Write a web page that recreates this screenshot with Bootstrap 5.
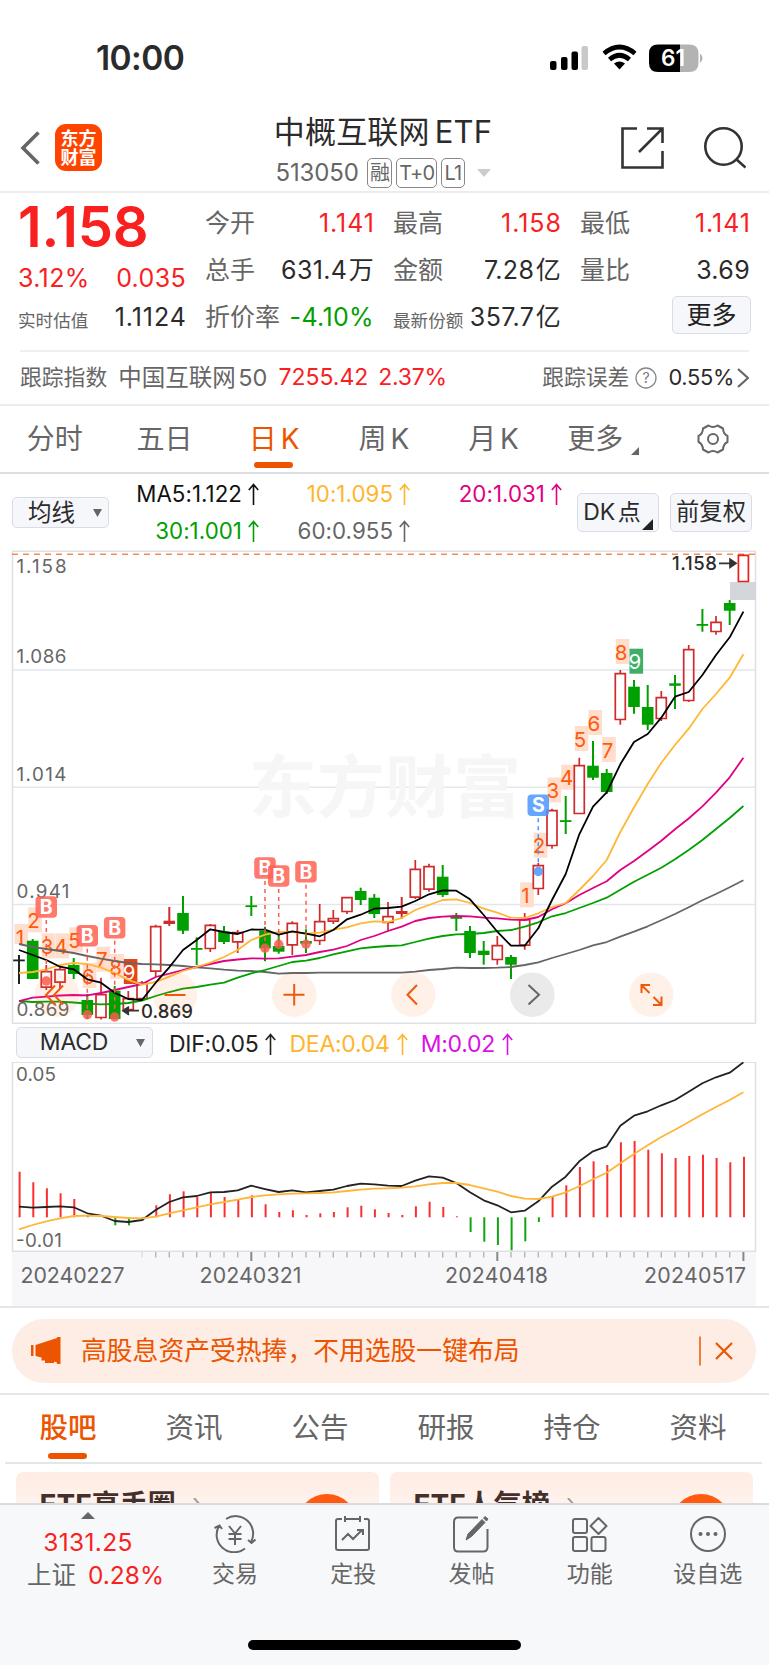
<!DOCTYPE html>
<html lang="zh-CN">
<head>
<meta charset="utf-8">
<meta name="viewport" content="width=device-width, initial-scale=1">
<title>中概互联网ETF 513050</title>
<link href="https://cdn.jsdelivr.net/npm/bootstrap@5.3.0/dist/css/bootstrap.min.css" rel="stylesheet">
<style>
:root{--up:#f9211f;--down:#00a000;--brand:#ec5400;--dim:#666;--ink:#2b2b2b;--line:#e4e6ea}
body{width:769px;height:1665px;overflow:hidden;background:#fff;color:var(--ink);font-family:Inter,"Noto Sans CJK SC",sans-serif;font-size:24px;line-height:1;white-space:nowrap}
svg{display:block;flex:none}
.up{color:var(--up)}.down{color:var(--down)}.dim{color:var(--dim)}.brand{color:var(--brand)}
.status{height:100px;padding:17px 66px 0 96px}
.clock{font-size:33.5px;font-weight:600;letter-spacing:-.6px}
.head{height:92.5px;border-bottom:2px solid #ececec;padding:5px 23px 0 20px}
.logo{width:47px;height:47px;border-radius:11px;background:#ff4400;color:#fff;font-size:18px;font-weight:700;line-height:19px;margin-left:15px}
.heading{padding-left:44px}
.title{font-size:31px;line-height:42px;letter-spacing:.2px;word-spacing:-4px}
.code{font-size:24px;letter-spacing:-.1px;line-height:32px;margin-bottom:-4px;margin-top:4px}
.chip{border:1.5px solid #888;border-radius:5px;height:30px;font-size:20px;padding:0 2px;letter-spacing:-.7px}
.quote{display:grid;grid-template-columns:168px 169px 168px 170px;column-gap:19px;grid-template-rows:repeat(3,47px);padding-left:18px;height:157px;padding-top:7px;font-size:25px;letter-spacing:.35px;word-spacing:-6px}
.quote>div{display:flex;align-items:center;justify-content:space-between}
.quote .wide{letter-spacing:.95px;margin-right:-.9px}
.quote .lbl{font-size:25px;color:var(--dim);letter-spacing:0}
.quote .lbl-s{font-size:17.6px;color:var(--dim);letter-spacing:0;padding-top:8px}
.price{font-size:56px;font-weight:600;letter-spacing:-.2px;padding-top:7px}
.pill{background:#f6f7fa;border:1.5px solid #d9dce5;border-radius:5px;display:flex;align-items:center;justify-content:center}
.track{height:54px;margin:0 20px;border-top:2px solid #eeeff1;font-size:23px;letter-spacing:-.3px}
.track .dim{letter-spacing:0;word-spacing:-4px}
.period{display:grid;grid-template-columns:repeat(7,109.7px);height:70px;border-top:2px solid #ececee;border-bottom:2px solid #dcdee4;font-size:28px;color:var(--dim);word-spacing:-4px}
.period>div,.feed>div{position:relative;display:flex;align-items:center;justify-content:center}
.on{color:var(--brand)}
.on::after{content:"";position:absolute;bottom:4px;left:50%;width:39px;margin-left:-20px;height:6px;border-radius:3px;background:var(--brand)}
.ma{height:76px;padding-left:12px}
.ma-grid{display:grid;grid-template-columns:150px 151px 152px;grid-template-rows:37px 37px;font-size:22.3px;letter-spacing:.05px;margin-top:3px}
.ma-grid>div{display:flex;align-items:center;justify-content:flex-end;gap:6px}
.macd{height:38px;padding-left:16px;font-size:23px;letter-spacing:-.25px}
.dates{height:56px;border-bottom:2px solid var(--line)}
.notice{height:64px;margin:11px 13px 10.5px 12px;border-radius:33px;background:#fdede4;color:var(--brand);font-size:25.8px;padding:0 23px 0 18px}
.feed{display:grid;grid-template-columns:repeat(6,126px);height:68.5px;margin:0 7px 0 5px;border-bottom:2px solid var(--line);font-size:28.5px;color:var(--dim)}
.feed .on::after{bottom:3px}
.rule{border-top:2px solid var(--line)}
.cards{height:39.5px;padding:8px 16px 0 15.500px;gap:11px;overflow:hidden}
.promo{width:363px;height:90px;border-radius:7px 7px 0 0;background:linear-gradient(#ffece4,#fff3ee 40px);padding:19px 22px 0 24px;color:#43302b;font-size:28px;font-weight:700}
.disc{width:60px;height:60px;border-radius:50%;background:#ff5a10;margin-top:3px}
.dock{height:166px;background:#f7f8fa;border-top:2px solid #d9dbdf;position:relative}
.dock-grid{display:grid;grid-template-columns:176px repeat(5,118.2px);height:96px;color:var(--dim);font-size:23px}
.dock-grid>div{display:flex;flex-direction:column;align-items:center}
.dock-grid .ico{margin:10px 0 9.500px}
.index-val{font-size:24.5px;letter-spacing:.35px}
.home{width:273px;height:10px;border-radius:5px;background:#000;position:absolute;left:248px;top:134.500px}
svg text{font-family:Inter,"Noto Sans CJK SC",sans-serif}
</style>
</head>
<body>
<div class="status d-flex align-items-center justify-content-between">
  <span class="clock">10:00</span>
  <svg width="154" height="30" viewBox="0 0 154 30"><rect y="17" x="1" width="6.5" height="9" rx="2"/><rect x="12" y="13" width="6.5" height="13" rx="2"/><rect x="22.500" y="7.500" width="6.500" height="18.500" rx="2"/><rect x="32.500" y="2" width="6.500" height="24" rx="2" fill="#c9c9c9"/>
  <g fill="none" stroke="#000" stroke-width="4.700"><path d="M55 9.500Q70.500-3.500 86 9.500"/><path d="M60.500 15.500Q70.500 7 80.500 15.500"/></g><path d="M65 19.500Q70.500 15.500 76 19.500L70.500 25.500Z"/>
  <path d="M109 .5H131V28H109Q100 28 100 19V9.500Q100 .5 109 .5Z"/><path d="M131 .5H140Q149.500 .5 149.500 9.500V19Q149.500 28 140 28H131Z" fill="#b3b3b3"/><path d="M151 9.500Q156 14 151 19Z" fill="#b3b3b3"/><text x="112" y="22.300" font-size="22.500" font-weight="600" fill="#fff" textLength="24" lengthAdjust="spacingAndGlyphs">61</text></svg>
</div>
<div class="head d-flex align-items-center">
  <svg width="20" height="34" viewBox="0 0 20 34" fill="none" stroke="#666" stroke-width="3.600"><path d="M18.500 1.500 3 17 18.500 32.500"/></svg>
  <div class="logo d-flex flex-column align-items-center justify-content-center"><span>东方</span><span>财富</span></div>
  <div class="heading flex-grow-1 d-flex flex-column align-items-center">
    <div class="title">中概互联网 ETF</div>
    <div class="code dim d-flex align-items-center gap-1"><span class="me-1">513050</span><span class="chip d-flex align-items-center">融</span><span class="chip d-flex align-items-center">T+0</span><span class="chip d-flex align-items-center">L1</span><svg class="ms-2" width="14" height="8"><path d="M0 0H14L7 8Z" fill="#ccc"/></svg></div>
  </div>
  <svg width="126" height="44" viewBox="0 0 126 44" fill="none" stroke="#333" stroke-width="2.600"><path d="M17 2.500H2.500V41.500H42.500V25M27 2.500H42.500V17M42 3 19 26"/><circle cx="103.500" cy="20.500" r="18.200"/><path d="M116 33 125.500 41.500"/></svg>
</div>
<div class="quote">
  <div><span class="price up">1.158</span></div>
  <div><span class="lbl">今开</span><span class="up wide">1.141</span></div>
  <div><span class="lbl">最高</span><span class="up wide">1.158</span></div>
  <div><span class="lbl">最低</span><span class="up wide">1.141</span></div>
  <div class="up" style="padding-top:16px"><span>3.12%</span><span>0.035</span></div>
  <div><span class="lbl">总手</span><span>631.4 万</span></div>
  <div><span class="lbl">金额</span><span>7.28 亿</span></div>
  <div><span class="lbl">量比</span><span>3.69</span></div>
  <div><span class="lbl-s">实时估值</span><span class="wide">1.1124</span></div>
  <div><span class="lbl">折价率</span><span class="down">-4.10%</span></div>
  <div><span class="lbl-s">最新份额</span><span>357.7 亿</span></div>
  <div class="justify-content-end"><span class="pill lbl" style="width:79px;height:38px;color:#222;margin-right:-1px;margin-top:-4px">更多</span></div>
</div>
<div class="track d-flex align-items-center">
  <span class="dim" style="font-size:21.800px">跟踪指数</span><span class="dim" style="margin-left:11px;font-size:23.500px">中国互联网 50</span><span class="up" style="margin-left:11px;letter-spacing:0">7255.42</span><span class="up" style="margin-left:10px">2.37%</span>
  <span class="dim ms-auto" style="font-size:21.800px">跟踪误差</span>
  <svg style="margin:0 11px 0 6px" width="22" height="22" viewBox="0 0 22 22"><circle cx="11" cy="11" r="10" fill="none" stroke="#888" stroke-width="1.300"/><text x="11" y="16" font-size="14" text-anchor="middle" fill="#777">?</text></svg>
  <span style="font-size:21.800px">0.55%</span><svg style="margin-left:3px" width="12" height="20" viewBox="0 0 12 20" fill="none" stroke="#666" stroke-width="2.200"><path d="M1 1 11 10 1 19"/></svg>
</div>
<div class="period">
  <div>分时</div><div>五日</div><div class="on">日 K</div><div>周 K</div><div>月 K</div>
  <div>更多<svg class="ms-2 mt-4" width="8" height="8"><path d="M8 0V8H0Z" fill="#666"/></svg></div>
  <div><svg width="32" height="32" viewBox="0 0 32 32" fill="none" stroke="#666" stroke-width="2"><path d="M11.500 2.500Q16 5.500 20.500 2.500L26 5.500Q26.300 11 30.500 13V19Q26.300 21 26 26.500L20.500 29.500Q16 26.500 11.500 29.500L6 26.500Q5.700 21 1.500 19V13Q5.700 11 6 5.500Z" stroke-linejoin="round"/><circle cx="16" cy="16" r="5"/></svg></div>
</div>
<div class="ma d-flex align-items-center">
  <div class="pill" style="width:97px;height:31px;font-size:23.500px;gap:18px;padding-left:9px;margin-top:2px">均线<svg width="9" height="8"><path d="M0 0H9L4.500 8Z" fill="#666"/></svg></div>
  <div class="ma-grid" id="ma"></div>
  <div class="pill" style="width:82px;height:39px;font-size:23px;margin-left:15px;gap:1px;margin-top:1px;word-spacing:-4px">DK 点<svg width="11" height="11" style="margin-top:25px"><path d="M11 0V11H0Z" fill="#222"/></svg></div>
  <div class="pill" style="width:82px;height:39px;font-size:23.300px;margin-left:11px;margin-top:1px">前复权</div>
</div>
<svg id="kline" width="769" height="474" viewBox="0 550 769 474"></svg>
<div class="macd d-flex align-items-center">
  <div class="pill" style="width:137px;height:31px;gap:28px;padding-left:16px">MACD<svg width="9" height="8"><path d="M0 0H9L4.500 8Z" fill="#666"/></svg></div>
  <div class="d-flex" id="macdText" style="margin:3px 0 0 16px;gap:13px"></div>
</div>
<svg id="macd" width="769" height="190" viewBox="0 1062 769 190"></svg>
<div class="dates"><svg id="dates" width="769" height="54" viewBox="0 1252 769 54"></svg></div>
<div class="notice d-flex align-items-center">
  <svg width="31" height="27" viewBox="0 0 31 27" fill="#ec5400"><path d="M1 8h2.500v11H1zM5.500 8 27 1V0h3.500v27H27v-1.500L24 24.500V26H15V23.500H11.500V20.500L5.500 19Z"/></svg>
  <span style="margin-left:20px">高股息资产受热捧，不用选股一键布局</span>
  <svg class="ms-auto" width="35" height="30" viewBox="0 0 35 30" stroke="#ec5400" fill="none"><path d="M2 .5V29.500" stroke-width="1.500"/><path d="M18 7 34 23M34 7 18 23" stroke-width="2.200"/></svg>
</div>
<div class="rule"></div>
<div class="feed"><div class="on fw-medium">股吧</div><div>资讯</div><div>公告</div><div>研报</div><div>持仓</div><div>资料</div></div>
<div class="cards d-flex">
  <div class="promo d-flex"><span>ETF高手圈</span><svg width="10" height="16" style="margin:7px 0 0 17px" fill="none" stroke="#a99" stroke-width="2"><path d="M1 0 8 8 1 16"/></svg><div class="disc ms-auto"></div></div>
  <div class="promo d-flex"><span>ETF人气榜</span><svg width="10" height="16" style="margin:7px 0 0 17px" fill="none" stroke="#a99" stroke-width="2"><path d="M1 0 8 8 1 16"/></svg><div class="disc ms-auto"></div></div>
</div>
<div class="dock">
  <div class="dock-grid">
    <div><svg width="14" height="7" style="margin:7px 0 11px"><path d="M7 0 14 7H0Z" fill="#666"/></svg><span class="up index-val">3131.25</span><div class="d-flex align-items-center" style="margin-top:8px;padding-left:15px;gap:12px"><span style="font-size:24.500px">上证</span><span class="up" style="font-size:24.500px">0.28%</span></div></div>
    <div><svg class="ico" width="44" height="38" viewBox="0 0 44 38" fill="none" stroke="#666" stroke-width="2"><path d="M13 4A17.500 17.500 0 0 1 38 27M32 33.500A17.500 17.500 0 0 1 6 11M1.500 13 6.500 10.500 9 14M42.500 24.500 38.500 28 35 25M16 11 22 18.500 28 11M15.500 19H28.500M15.500 24H28.500M22 18.500V30"/></svg><span>交易</span></div>
    <div><svg class="ico" width="38" height="38" viewBox="0 0 38 38" fill="none" stroke="#666" stroke-width="2"><path d="M8 4H4Q2 4 2 6V33Q2 35 4 35H33Q35 35 35 33V6Q35 4 33 4H30M11 4H26M11 1V7M26 1V7M8 25 14 19 19 24 28 15M23 15H29V20"/></svg><span>定投</span></div>
    <div><svg class="ico" width="38" height="38" viewBox="0 0 38 38" fill="none" stroke="#666" stroke-width="2"><path d="M26 2.500H6Q2 2.500 2 7V32Q2 36.500 6 36.500H31Q35.500 36.500 35.500 32V14"/><path d="M14 25 16 19 30 4.500 33 7.500 19.500 21.500ZM31.500 3 33 1.500 36 4 34.500 6Z" fill="#666" stroke-width="1"/></svg><span>发帖</span></div>
    <div><svg class="ico" width="38" height="38" viewBox="0 0 38 38" fill="none" stroke="#666" stroke-width="2"><rect x="2" y="4" width="14" height="14" rx="2"/><rect x="2" y="22" width="14" height="14" rx="2"/><rect x="20.500" y="22" width="14" height="14" rx="2"/><path d="M27.500 3 35.500 11 27.500 19 19.500 11Z" stroke-linejoin="round"/></svg><span>功能</span></div>
    <div><svg class="ico" width="38" height="38" viewBox="0 0 38 38" fill="none" stroke="#666" stroke-width="2"><circle cx="19" cy="19" r="17"/><g fill="#666" stroke="none"><circle cx="11.500" cy="19" r="2"/><circle cx="19" cy="19" r="2"/><circle cx="26.500" cy="19" r="2"/></g></svg><span>设自选</span></div>
  </div>
  <div class="home"></div>
</div>
<script src="https://cdn.jsdelivr.net/npm/bootstrap@5.3.0/dist/js/bootstrap.bundle.min.js"></script>
<script>
const X=i=>19+i*13.667, f=n=>n.toFixed(1);
const arrow='<svg width="11" height="23" viewBox="0 0 11 23" fill="none" stroke="currentColor" stroke-width="1.6"><path d="M5.500 22V1.500M.8 7 5.500 1.500 10.200 7"/></svg>';
ma.innerHTML=[['MA5:1.122','#111'],['10:1.095','#ffb52e'],['20:1.031','#e00084'],['30:1.001','#00a000'],['60:0.955','#666']].map(([t,c])=>`<div style="color:${c}"><span>${t}</span>${arrow}</div>`).join('');
macdText.innerHTML=[['DIF:0.05','#222'],['DEA:0.04','#ffb52e'],['M:0.02','#d911e4']].map(([t,c])=>`<div class="d-flex align-items-center" style="color:${c};gap:7px"><span>${t}</span>${arrow}</div>`).join('');
const line=(a,c,w=2)=>`<polyline fill="none" stroke="${c}" stroke-width="${w}" stroke-linejoin="round" points="${a.map((y,i)=>f(X(i))+','+f(y)).join(' ')}"/>`;
const tx=(x,y,t,s,c,w,extra='')=>`<text x="${x}" y="${y}" font-size="${s}" fill="${c}" ${w?`textLength="${w}"`:''} ${extra}>${t}</text>`;
/* type, high, body top, body bottom, low : r hollow, R solid red, g green, k black */
const K=`k 955 959.5 960.5 984|g 939 940.7 979 979|r 965 971 987.7 990|r 967 969 982.7 989|g 958 965 974 979|g 994 1000 1015 1019|r 977.7 994 1018 1019.5|g 986 990.7 1019 1019|r 991 998 1010 1012|r 981 982.5 999 1001|r 924.7 926 971.7 976.7|R 907 920.7 924 926|g 896 913 930.7 934|g 937.3 948 949.5 965|r 924 924.7 949 952|g 926 931.7 942 944|r 930 932 942.3 953|g 896 905.3 906.8 916|g 926.7 930.7 948.3 961.3|g 935 946 951.7 953.7|r 921.3 922.7 945.3 955|g 929.3 941 943.7 953|r 904 921 941 945|r 910 918 921.7 924|r 897 897 912 914|g 887.7 891 900 905|g 894 897.7 914 918|r 902 916 923 931|R 897 911 914 918.7|r 860 868.7 897.7 899|r 863.7 866 889.7 891.7|g 865 876.7 895 897|g 913 917 918.5 931|g 926 931 953 958|g 941 950.7 955 964.7|r 936 945 960 964.7|g 955 957 964.7 979|r 913 919 945.7 949.7|r 863 865 889 895|r 808.7 810 846 848.7|g 796 820.2 821.8 834|r 757.7 765 814 814|g 741 765.7 777.7 780|g 769 773 792 794|r 670 673 720 724.7|g 680 686.7 707 713.7|g 685 707 724.7 730|r 691 697 719 721|g 675 683.3 685.8 709|r 645 649 701 702|g 609 624 625.5 631.7|r 616 621.7 632 634.7|g 600 603 610.7 625|r 554.300 554.700 582 582`.split('|').map(s=>{s=s.split(' ');return[s[0],...s.slice(1).map(Number)]});
const MA={
'#666':[944,947,949,951,953,956,958.7,961,963,964,964.3,965,966,967.3,968.3,969.7,970.7,971,972,973.7,973,973,972.7,972.7,972.7,972.7,972.7,972.7,972.7,971.7,970,969,967.7,968,968,967.7,967,965,962.3,958,954,950,945.3,942,936.7,931.7,926.3,920.3,914,907.3,900.3,894,887.3,880.3],
'#00a000':[1001,1002,1001.7,1001.7,1002.5,1003.7,1004.3,1004,1003,1000.7,996,992,988.7,987,984.7,982.7,977.7,973.3,970,966,962,960.7,958,954.3,951.3,948.3,947,946,945.3,942,938.7,936,934.3,934,933,931,930,926.7,922.3,916.3,913,908,903,897.7,889.7,881.7,874.7,867.7,859.3,850,840,829,818,806],
'#e00084':[1001,997.7,996.7,995.5,995,995.3,993,990,987,984,977,973.7,970,967,964,961,959.5,958.3,958.7,958.3,956.7,955,952,949.7,946,940,936,931,926.7,921,918,916.7,916,916.3,917.7,918.3,919.7,920,917,909.3,903.3,895,888,881.3,870,861,851,840.7,829.3,818.5,806.3,792.7,777.3,757.7],
'#ffb835':[973,972,969.3,965,963,964,967.7,973,980,984.7,982,976.7,971,967,962.7,957,950,940,934.7,932,932,933.7,932.7,929.7,927.3,923.3,921.3,922,918,910,905,900,899.3,903,908.7,912.7,917.7,918,913.3,907,903,890,876,860,832,807.5,784,762.7,745,728.7,709,694,677.7,654.3],
'#000':[950,955,960,966.7,969.3,979.3,982.7,992.7,999,1000,982.7,967.3,950,940,929.3,932,934,929.5,929.7,934.7,931.3,933.7,936.3,930,919.3,914.7,908.7,908,906.7,901,894.3,890.3,890.7,899.3,915,931.7,945.7,945.7,928.3,900,874,834.3,806.7,792.3,764.3,742,734,717.7,696.7,692,675,655,637.3,611.7]};
let h='<g stroke="#e4e7ec" stroke-width="1.6" fill="none"><path d="M12 670H756M12 787.300H756M12 904.500H756"/><path d="M12.500 551.300H755.500V1023.300H12.500Z" stroke="#dfe1e6"/></g>';
h+=tx(249,812,'东方财富',68,'#f6f6f6',272,'font-weight="700"');
h+='<path d="M12 554.300H756" stroke="#f58b52" stroke-width="1.500" stroke-dasharray="6 5"/><rect x="730" y="582" width="26" height="18" fill="#d3d6db"/>';
[[573,'1.158'],[663,'1.086'],[781,'1.014'],[898,'0.941'],[1016,'0.869']].forEach(a=>h+=tx(16.5,a[0],a[1],18.8,'#666',a[1][0]=='0'?53:50));
/* TD sequence counters */
[[0,924,1],[1,907.3,2],[2,933.3,3],[3,933.3,4],[4,927.3,5],[5,963,6],[6,946.7,7],[7,954,8],[8,959,9,'#e5431a'],[37,882.3,1],[38,832.7,2],[39,777.5,3],[40,764.7,4],[41,726,5],[42,710,6],[43,737,7],[44,639,8],[45,648.7,9,'#3cb066']].forEach(([i,y,n,c])=>h+=`<rect x="${f(X(i)-4.5)}" y="${y}" width="13.600" height="${n==1&&i==0?20:25}" fill="${c||'#ffdecd'}"/>`+tx(f(X(i)+.8),y+20.500,n,20.5,c?'#fff':'#ff5a0a',0,'text-anchor="middle"'));
K.forEach(([t,hi,a,b,lo],i)=>{const x=X(i),c=t=='g'?'#00a000':t=='k'?'#222':'#cf2b2b';
 h+=t=='r'?`<path d="M${f(x)} ${hi}V${a}M${f(x)} ${b}V${lo}M${f(x-5)} ${a+.7}H${f(x+5)}V${b-.5}H${f(x-5)}Z" fill="none" stroke="${i==53?'#e8201c':c}" stroke-width="1.700"/>`:`<path d="M${f(x)} ${hi}V${lo}" stroke="${c}" stroke-width="2"/><rect x="${f(x-5.8)}" y="${a}" width="11.600" height="${f(Math.max(b-a,1.8))}" fill="${c}"/>`});
for(const c in MA)h+=line(MA[c],c,1.8);
/* buy and sell marks */
[[2,907,981],[5,935.7,1014.7],[7,927.7,1017],[18,868,948.3],[19,876,944.3],[21,871.7,944.3],[38,805.3,871.5]].forEach(([i,y,d])=>{const s=i==38,x=X(i),c=s?'#4a96ff':'#fa5c50';
 h+=`<path d="M${f(x)} ${y+13}V${d-6}" stroke="${c}" stroke-width="1.500" stroke-dasharray="4 4"/><circle cx="${f(x)}" cy="${d}" r="4.700" fill="${c}" opacity=".85"/><rect x="${f(x-10.8)}" y="${y-10.7}" width="21.500" height="21.500" rx="4" fill="${s?'#4a96ff':'#ff6252'}" opacity=".85"/>`+tx(f(x),y+7,s?'S':'B',19.5,'#fff',0,'text-anchor="middle" font-weight="700"')});
/* floating chart controls */
[57,175,294.3,413.3,532.3,651.3].forEach((x,i)=>h+=`<circle cx="${x}" cy="994.700" r="22.300" fill="${i==4?'#eaeaea':'#ff6a20'}" opacity="${i==4?1:.1}"/>`);
h+='<g fill="none" stroke="#f0590a" stroke-width="2"><path d="M55 985.500 46 995 55 1004.500M63 985.500 54 995 63 1004.500M164.500 995H185.500M283.500 994.700H304.500M294.200 984V1005.500M417 985 407.500 994.700 417 1004.500M649.500 993 641.500 985M641.500 993V985H650M653.500 997 661.500 1005M661.500 996.500V1005H653"/><path d="M528.500 985 539 994.700 528.500 1004.500" stroke="#666"/></g>';
h+='<path d="M139 1010.700H124M129 1006.700 123 1010.700 129 1014.700" stroke="#333" stroke-width="1.700" fill="#333"/><path d="M719 563.300H733M730 559.300 736 563.300 730 567.300Z" stroke="#333" stroke-width="1.700" fill="#333"/>'+tx(141,1017.7,'0.869',18.5,'#2b2b2b',52,'font-weight="500"')+tx(672,570,'1.158',18.5,'#2b2b2b',45,'font-weight="500"');
kline.innerHTML=h;
/* MACD pane, values in thirds of a pixel below the pane origin */
const P=a=>a.map(v=>1020+v/3), Z=1217.3;
const bar=P([455,487,505,520,537,586,592,616,616,602,556,523,514,530,518,531,540,526,553,576,571,585,580,576,562,557,568,579,585,559,545,561,589,636,665,675,691,664,606,531,496,441,424,435,367,363,389,400,414,408,404,414,427,410]);
const dif=P([560,563,561,559,562,580,587,603,606,600,570,546,532,528,517,516,511,497,507,516,511,517,513,509,498,491,493,497,498,482,469,473,489,517,541,556,577,572,544,500,470,424,394,379,317,287,274,256,240,215,190,172,158,127]);
const dea=P([628,615,604,595,588,587,588,591,594,595,590,580,571,562,553,546,539,531,526,523,521,520,519,517,513,509,506,505,503,499,493,489,489,495,505,515,528,536,537,530,517,499,478,458,430,402,376,351,329,306,283,261,240,217]);
macd.innerHTML='<path d="M12.500 1062.300H755.500V1251.300H12.500Z" fill="none" stroke="#dfe1e6" stroke-width="1.600"/>'+bar.map((y,i)=>`<path d="M${f(X(i)+.6)} ${Z}V${f(y)}" stroke="${y>Z?'#10a510':'#fb2f2f'}" stroke-width="2"/>`).join('')+line(dif,'#222',1.8)+line(dea,'#ffb535',1.8)+tx(16,1081,'0.05',18.8,'#666',40)+tx(16,1247,'-0.01',18.8,'#666',46);
let d='<rect x="12" y="1252" width="744" height="54" fill="#f7f7fa"/>';
for(let i=9;i<54;i++){const m=[17,35,53].includes(i);d+=`<path d="M${f(X(i))} 1252V${m?1261:1257.500}" stroke="${m?'#888':i==9?'#ddd':'#b5b5b8'}" stroke-width="${m?2:1.400}"/>`}
[[20.5,'20240227',104],[199.5,'20240321',102],[445,'20240418',103],[644,'20240517',102]].forEach(a=>d+=tx(a[0],1282.7,a[1],21.3,'#666',a[2]));
dates.innerHTML=d;
</script>
</body>
</html>
